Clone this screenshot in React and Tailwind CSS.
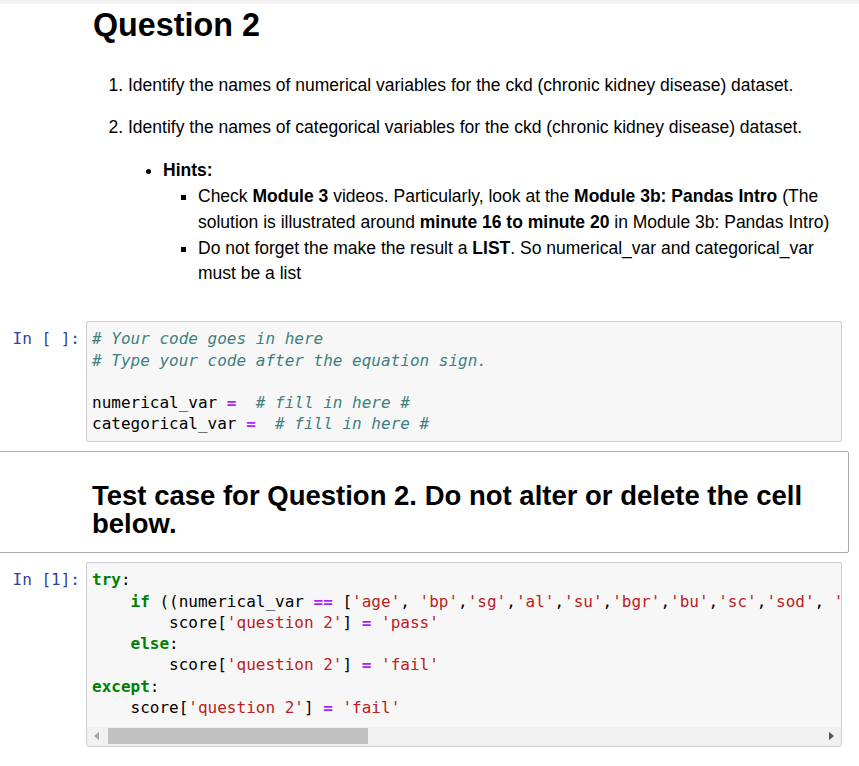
import React from "react";

const K = ({ children }) => <span className="font-bold text-[#008000]">{children}</span>;
const O = ({ children }) => <span className="font-bold text-[#AA22FF]">{children}</span>;
const S = ({ children }) => <span className="text-[#BA2121]">{children}</span>;
const C = ({ children }) => <span className="italic text-[#408080]">{children}</span>;

const mono = "font-['DejaVu_Sans_Mono','Liberation_Mono',monospace] text-[16px] leading-[21.25px]";

function Prompt({ label }) {
  return (
    <div className={`w-[86px] shrink-0 pt-[7.4px] pr-[6px] text-right text-[#303F9F] whitespace-pre ${mono}`}>
      {label}
    </div>
  );
}

export default function App() {
  return (
    <div className="w-[859px] h-[766px] overflow-hidden bg-white text-black font-['Liberation_Sans',Arial,sans-serif]">
      <div className="h-[4px] bg-gradient-to-b from-[#eeeeee] to-[#f6f6f6]" />

      {/* Markdown cell: Question 2 */}
      <div className="flex pr-[17px]">
        <div className="w-[86px] shrink-0" />
        <div className="flex-1 px-[7px]">
          <h1 className="mt-[2.8px] text-[32.3px] leading-[36px] font-bold">Question 2</h1>
          <ol className="list-decimal pl-[35px] mt-[30.1px] text-[17.5px] leading-[25.5px]">
            <li>Identify the names of numerical variables for the ckd (chronic kidney disease) dataset.</li>
            <li className="mt-[16.3px]">
              Identify the names of categorical variables for the ckd (chronic kidney disease) dataset.
              <ul className="list-disc pl-[35px] mt-[17.5px]">
                <li>
                  <b>Hints:</b>
                  <ul className="list-[square] pl-[35px] mt-[1.2px] leading-[25.6px]">
                    <li>
                      Check <b>Module 3</b> videos. Particularly, look at the <b>Module 3b: Pandas Intro</b> (The
                      solution is illustrated around <b>minute 16 to minute 20</b> in Module 3b: Pandas Intro)
                    </li>
                    <li>
                      Do not forget the make the result a <b>LIST</b>. So numerical_var and categorical_var must be a
                      list
                    </li>
                  </ul>
                </li>
              </ul>
            </li>
          </ol>
        </div>
      </div>

      {/* Code cell 1 */}
      <div className="flex pr-[17px] mt-[34.2px]">
        <Prompt label="In [ ]:" />
        <div className="flex-1 min-w-0 border border-[#cfcfcf] rounded-[2px] bg-[#f7f7f7]">
          <pre className={`pl-[5px] pt-[6.4px] pb-[6.4px] whitespace-pre overflow-hidden ${mono}`}>
            <C># Your code goes in here</C>
            {"\n"}
            <C># Type your code after the equation sign.</C>
            {"\n\n"}
            {"numerical_var "}
            <O>=</O>
            {"  "}
            <C># fill in here #</C>
            {"\n"}
            {"categorical_var "}
            <O>=</O>
            {"  "}
            <C># fill in here #</C>
          </pre>
        </div>
      </div>

      {/* Selected markdown cell */}
      <div className="mt-[9px] -ml-[2px] mr-[10px] border border-[#ababab] rounded-[2px] flex">
        <div className="w-[87px] shrink-0" />
        <div className="flex-1 pl-[6px] pr-[13px] pt-[29.9px] pb-[13.1px]">
          <h2 className="text-[27.5px] leading-[28.5px] font-bold">
            Test case for Question 2. Do not alter or delete the cell below.
          </h2>
        </div>
      </div>

      {/* Code cell 2 */}
      <div className="flex pr-[17px] mt-[9px]">
        <Prompt label="In [1]:" />
        <div className="flex-1 min-w-0 border border-[#cfcfcf] rounded-[2px] bg-[#f7f7f7] overflow-hidden">
          <pre className={`pl-[5px] pt-[6.4px] pb-[8.9px] whitespace-pre overflow-hidden ${mono}`}>
            <K>try</K>:{"\n    "}
            <K>if</K> ((numerical_var <O>==</O> [<S>'age'</S>, <S>'bp'</S>,<S>'sg'</S>,<S>'al'</S>,<S>'su'</S>,
            <S>'bgr'</S>,<S>'bu'</S>,<S>'sc'</S>,<S>'sod'</S>, <S>'pot'</S>,<S>'hemo'</S>,<S>'pcv'</S>,
            <S>'wc'</S>,<S>'rc'</S>]) <O>and</O> (categorical_var <O>==</O> [<S>'rbc'</S>,<S>'pc'</S>])):
            {"\n        "}score[<S>'question 2'</S>] <O>=</O> <S>'pass'</S>
            {"\n    "}
            <K>else</K>:{"\n        "}score[<S>'question 2'</S>] <O>=</O> <S>'fail'</S>
            {"\n"}
            <K>except</K>:{"\n    "}score[<S>'question 2'</S>] <O>=</O> <S>'fail'</S>
          </pre>
          <div className="h-[19px] bg-[#f1f1f1] flex items-center">
            <div className="w-[19px] h-full flex items-center justify-center">
              <svg width="5" height="8" viewBox="0 0 5 8">
                <path d="M5 0 L0 4 L5 8 Z" fill="#a3a3a3" />
              </svg>
            </div>
            <div className="ml-[2px] w-[260px] h-[16px] bg-[#c1c1c1]" />
            <div className="flex-1" />
            <div className="w-[19px] h-full flex items-center justify-center">
              <svg width="5" height="8" viewBox="0 0 5 8">
                <path d="M0 0 L5 4 L0 8 Z" fill="#505050" />
              </svg>
            </div>
          </div>
        </div>
      </div>
    </div>
  );
}
